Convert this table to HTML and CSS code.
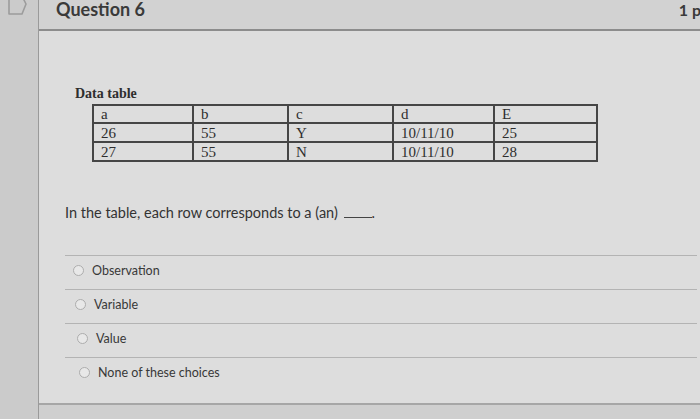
FILE: index.html
```html
<!DOCTYPE html>
<html>
<head>
<meta charset="utf-8">
<link rel="stylesheet" href="styles.css">
</head>
<body>
<div class="app">
  <div class="gutter">
    <svg class="flag" width="38" height="29" viewBox="0 0 38 29">
      <path d="M9 -2 V14 H22 L26 4 L23 -2" fill="none" stroke="#9c9c9c" stroke-width="1.6" stroke-linejoin="round"/>
    </svg>
  </div>
  <div class="main">
    <div class="header">
      <div class="title">Question 6</div>
      <div class="points">1 pts</div>
    </div>
    <div class="card">
      <div class="table-label">Data table</div>
      <table class="data">
        <tr><td class="c1">a</td><td class="c2">b</td><td class="c3">c</td><td class="c4">d</td><td class="c5">E</td></tr>
        <tr><td>26</td><td>55</td><td>Y</td><td>10/11/10</td><td>25</td></tr>
        <tr><td>27</td><td>55</td><td>N</td><td>10/11/10</td><td>28</td></tr>
      </table>
      <p class="question">In the table, each row corresponds to a (an) <span class="blank"></span>.</p>
      <div class="answers">
        <label class="answer a1"><span class="radio"></span><span>Observation</span></label>
        <label class="answer a2"><span class="radio"></span><span>Variable</span></label>
        <label class="answer a3"><span class="radio"></span><span>Value</span></label>
        <label class="answer a4"><span class="radio"></span><span>None of these choices</span></label>
      </div>
    </div>
  </div>
</div>
</body>
</html>
```
FILE: styles.css
```css
* { box-sizing: border-box; }
html, body {
  margin: 0;
  padding: 0;
  width: 700px;
  height: 419px;
  overflow: hidden;
  background: #cfcfcf;
  font-family: Lato, "Open Sans", sans-serif;
  color: #333;
}
.app {
  display: flex;
  height: 419px;
}
.gutter {
  width: 39px;
  flex: none;
  background: #cbcbcb;
  border-right: 1px solid #9a9a9a;
}
.flag { display: block; }
.main {
  flex: 1;
  display: flex;
  flex-direction: column;
  min-width: 0;
}
.header {
  height: 31px;
  flex: none;
  background: #d2d2d2;
  border-bottom: 2px solid #8c8c8c;
  display: flex;
  justify-content: space-between;
  align-items: flex-start;
  overflow: hidden;
}
.title {
  font-weight: 700;
  font-size: 18px;
  line-height: 19px;
  padding-left: 17px;
  color: #3a3a3a;
}
.points {
  font-weight: 700;
  font-size: 16px;
  line-height: 19px;
  margin-right: -14px;
  white-space: nowrap;
  color: #3a3a3a;
}
.card {
  background: #dddddd;
  padding: 55px 3px 0 26px;
  border-bottom: 2px solid #a6a6a6;
}
.table-label {
  font-family: "Liberation Serif", serif;
  font-weight: 700;
  font-size: 14px;
  line-height: 16px;
  margin-left: 10px;
  color: #2e2e2e;
}
.data {
  margin: 2px 0 0 27px;
  border-collapse: collapse;
  border: 2px solid #454545;
  font-family: "Liberation Serif", serif;
  font-size: 15px;
  color: #2e2e2e;
}
.data td {
  border: 2px solid #454545;
  padding: 0 7px;
  height: 19px;
  line-height: 16px;
}
.data tr:first-child td { height: 18px; }
.c1 { width: 100px; }
.c2 { width: 95px; }
.c3 { width: 105px; }
.c4 { width: 101px; }
.c5 { width: 103px; }
.question {
  margin: 42px 0 0 0;
  font-size: 14.5px;
  line-height: 18px;
  color: #333;
}
.blank {
  display: inline-block;
  width: 28px;
  border-bottom: 1px solid #444;
  margin-left: 2px;
}
.answers {
  margin-top: 33px;
}
.answer {
  display: flex;
  align-items: center;
  gap: 8px;
  border-top: 1px solid #b3b3b3;
  padding: 6px 0 10px 8px;
  font-size: 12.5px;
  line-height: 17px;
  color: #383838;
}
.a2 { padding-left: 10px; }
.a3 { padding-left: 12px; }
.a4 { padding-left: 14px; padding-bottom: 22px; }
.radio {
  width: 11px;
  height: 11px;
  border-radius: 50%;
  border: 1px solid #adadad;
  background: #e8e8e8;
  flex: none;
}
```
